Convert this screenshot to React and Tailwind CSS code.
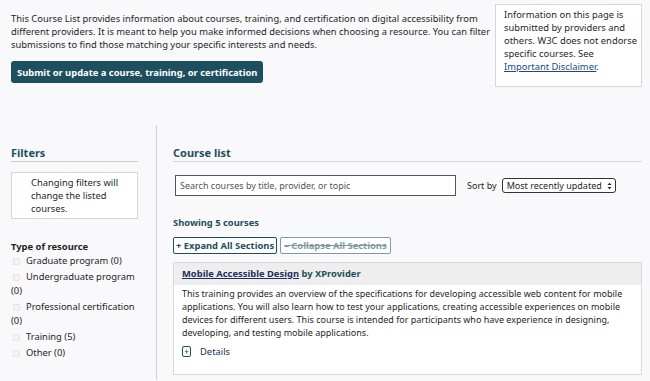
import { useState } from "react";

const types = [
  "Graduate program (0)",
  "Undergraduate program (0)",
  "Professional certification (0)",
  "Training (5)",
  "Other (0)",
];

export default function App() {
  const [query, setQuery] = useState("");

  return (
    <div className="min-h-[381px] bg-[#f9f9fb] text-[9.4px] leading-[13px] text-[#1f1f1f] font-['Noto_Sans',sans-serif]">
      {/* Intro */}
      <div className="flex justify-between pl-[11px] pr-[8px] pt-[4px]">
        <div className="w-[484px] pt-[8px]">
          <p>
            This Course List provides information about courses, training, and certification on digital accessibility from
            different providers. It is meant to help you make informed decisions when choosing a resource. You can filter
            submissions to find those matching your specific interests and needs.
          </p>
          <button className="mt-[10px] h-[22px] rounded-[3px] bg-[#1e4f5e] px-[6px] text-[9.4px] font-bold text-white">
            Submit or update a course, training, or certification
          </button>
        </div>
        <aside className="w-[147px] h-[83px] border border-[#d6d6d6] bg-white pl-[8px] pr-[2px] pt-[3px]">
          Information on this page is submitted by providers and others. W3C does not endorse specific courses. See{" "}
          <a href="#" className="text-[#1a4a8a] underline">
            Important Disclaimer
          </a>
          .
        </aside>
      </div>

      <div className="mt-[38px] flex">
        {/* Filters */}
        <div className="w-[157px] shrink-0 border-r border-[#cfcfcf] pl-[11px] pr-[18px] pt-[21px] pb-[20px]">
          <h2 className="border-b border-[#cfcfcf] pb-[1px] text-[11px] font-bold leading-[14px] text-[#1e4f5e]">
            Filters
          </h2>
          <div className="mt-[10px] border border-[#d6d6d6] bg-white pl-[19px] pr-[4px] py-[3px]">
            Changing filters will change the listed courses.
          </div>
          <fieldset className="mt-[21px]">
            <legend className="font-bold">Type of resource</legend>
            <ul className="mt-[1px] space-y-[2px] leading-[14px]">
              {types.map((t) => (
                <li key={t}>
                  <label>
                    <input type="checkbox" className="mr-[6px] ml-[2px] h-[7px] w-[7px] appearance-none rounded-[1px] border border-[#e6e6e6] bg-[#f3f3f3] align-[-1px]" />
                    {t}
                  </label>
                </li>
              ))}
            </ul>
          </fieldset>
        </div>

        {/* Main */}
        <main className="flex-1 pl-[16px] pr-[8px] pt-[21px]">
          <h2 className="border-b border-[#d6d6d6] pb-[1px] text-[11px] font-bold leading-[14px] text-[#1e4f5e]">
            Course list
          </h2>
          <div className="mt-[13px] flex items-center pl-[2px]">
            <input
              value={query}
              onChange={(e) => setQuery(e.target.value)}
              placeholder="Search courses by title, provider, or topic"
              className="h-[21px] w-[281px] border border-[#555] bg-white px-[4px] text-[9px] placeholder:text-[#555] outline-none"
            />
            <label className="ml-[11px] mr-[5px] text-[9px]">Sort by</label>
            <div className="flex h-[15px] w-[114px] items-center justify-between rounded-[3px] border border-[#333] bg-white pl-[4px] pr-[3px] text-[9px]">
              <span>Most recently updated</span>
              <svg width="5" height="8" viewBox="0 0 5 8">
                <path d="M0.5 3 L2.5 0.8 L4.5 3 Z M0.5 5 L2.5 7.2 L4.5 5 Z" fill="#222" />
              </svg>
            </div>
          </div>
          <p className="mt-[20px] font-bold text-[#1e4f5e]">Showing 5 courses</p>
          <div className="mt-[8px] flex gap-[3px]">
            <button className="h-[17px] rounded-[2px] border border-[#1e4f5e] bg-white px-[2px] font-bold text-[#1e4f5e]">
              + Expand All Sections
            </button>
            <button className="h-[17px] rounded-[2px] border border-[#7f9ba4] bg-white px-[3px] font-bold text-[#7f9ba4] line-through">
              – Collapse All Sections
            </button>
          </div>
          <article className="mt-[8px] border border-[#d9d9d9] bg-white">
            <header className="bg-[#eeeeee] px-[8px] py-[4px] leading-[14px] font-bold">
              <a href="#" className="text-[#1d2f5c] underline">
                Mobile Accessible Design
              </a>{" "}
              <span className="text-[#1e4f5e]">by XProvider</span>
            </header>
            <div className="px-[8px] pt-[2px] pb-[16px] text-[9px]">
              <p>
                This training provides an overview of the specifications for developing accessible web content for mobile
                applications. You will also learn how to test your applications, creating accessible experiences on mobile
                devices for different users. This course is intended for participants who have experience in designing,
                developing, and testing mobile applications.
              </p>
              <button className="mt-[6px] flex items-center gap-[9px] text-[9.4px] text-[#1d2f5c]">
                <span className="flex h-[11px] w-[9px] items-center justify-center rounded-[2px] border border-[#1e4f5e] text-[8px] leading-none">
                  +
                </span>
                Details
              </button>
            </div>
          </article>
        </main>
      </div>
    </div>
  );
}
